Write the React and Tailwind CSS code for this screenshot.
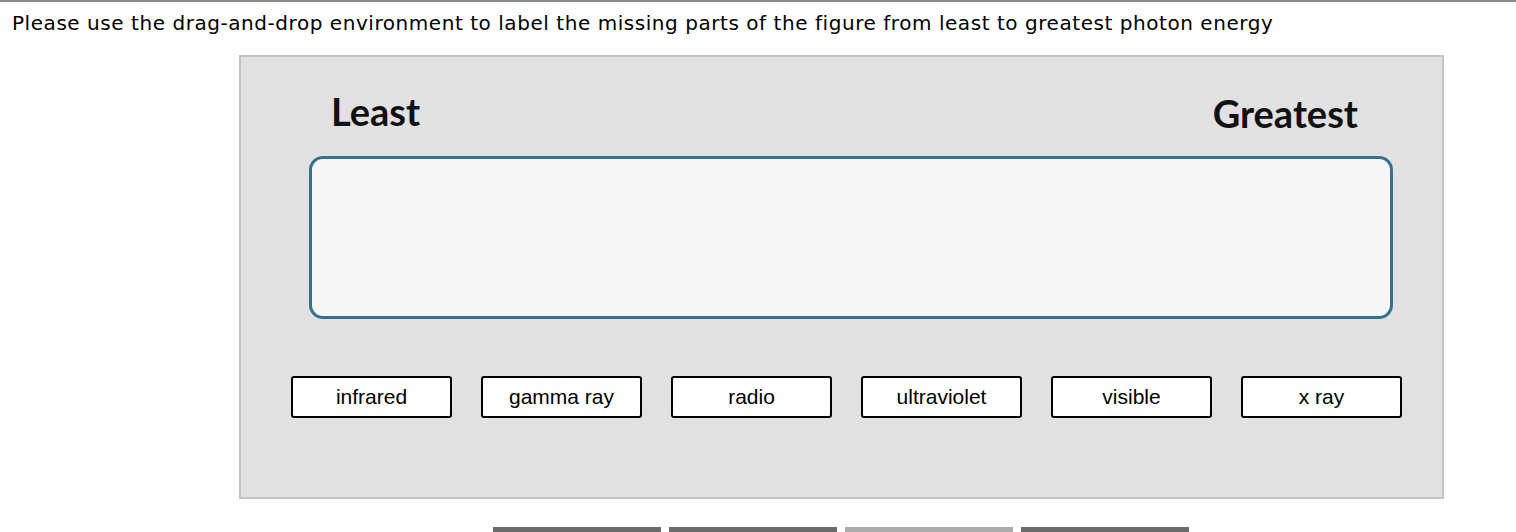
const choices = ['infrared', 'gamma ray', 'radio', 'ultraviolet', 'visible', 'x ray'];

export default function App() {
  return (
    <div className="h-[532px] w-[1516px] overflow-hidden bg-white border-t-2 border-[#8a8a8a]">
      {/* Prompt */}
      <p className="pl-[12px] pt-[8px] text-[20px] leading-[26px] tracking-[0.55px] text-black font-['DejaVu_Sans',sans-serif]">
        Please use the drag-and-drop environment to label the missing parts of the figure from least to greatest photon energy
      </p>

      {/* Drag and drop panel */}
      <div className="ml-[239px] mt-[19px] w-[1205px] h-[444px] bg-[#e1e1e1] border-2 border-[#c3c3c3]">
        <div className="flex justify-between pl-[90px] pr-[84px] pt-[32px] h-[99px] font-['Lato',sans-serif] font-bold text-[38px] leading-[44px] text-[#111]">
          <span>Least</span>
          <span className="pt-[2px]">Greatest</span>
        </div>

        <div className="ml-[68px] w-[1084px] h-[163px] bg-[#f7f7f7] border-[3px] border-[#35718f] rounded-[14px]" />

        <div className="flex gap-[29px] ml-[50px] mt-[57px]">
          {choices.map((c) => (
            <div
              key={c}
              className="w-[161px] h-[42px] flex items-center justify-center bg-white border-2 border-black rounded-[3px] text-[21px] text-black font-['Liberation_Sans',Arial,sans-serif]"
            >
              {c}
            </div>
          ))}
        </div>
      </div>

      {/* Bottom buttons (cut off) */}
      <div className="flex gap-[8px] ml-[493px] mt-[28px]">
        <div className="w-[168px] h-[30px] bg-[#6b6b6b]" />
        <div className="w-[168px] h-[30px] bg-[#6b6b6b]" />
        <div className="w-[168px] h-[30px] bg-[#ababab]" />
        <div className="w-[168px] h-[30px] bg-[#6b6b6b]" />
      </div>
    </div>
  );
}
